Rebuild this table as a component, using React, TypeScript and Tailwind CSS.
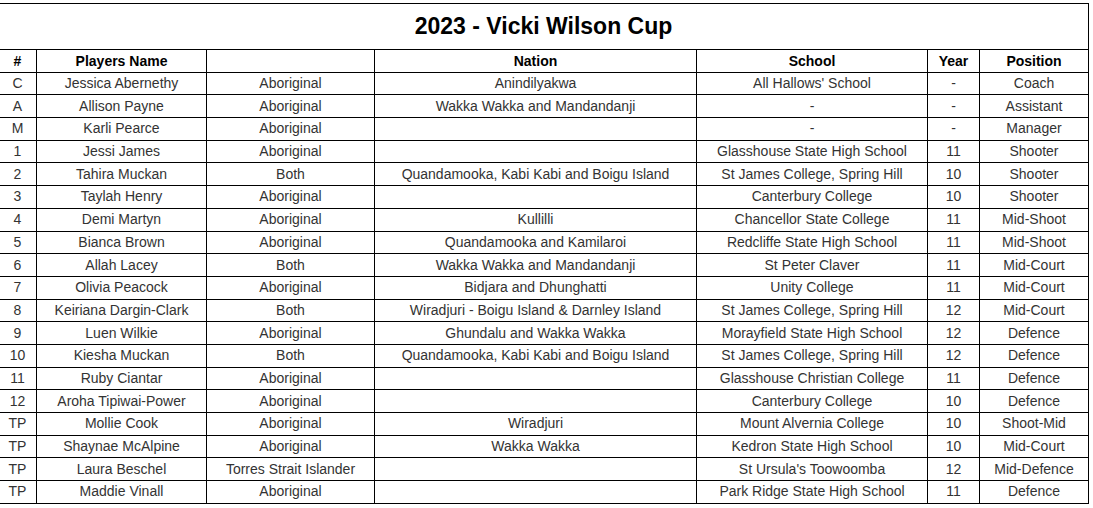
const rows: string[][] = [
  ["C", "Jessica Abernethy", "Aboriginal", "Anindilyakwa", "All Hallows' School", "-", "Coach"],
  ["A", "Allison Payne", "Aboriginal", "Wakka Wakka and Mandandanji", "-", "-", "Assistant"],
  ["M", "Karli Pearce", "Aboriginal", "", "-", "-", "Manager"],
  ["1", "Jessi James", "Aboriginal", "", "Glasshouse State High School", "11", "Shooter"],
  ["2", "Tahira Muckan", "Both", "Quandamooka, Kabi Kabi and Boigu Island", "St James College, Spring Hill", "10", "Shooter"],
  ["3", "Taylah Henry", "Aboriginal", "", "Canterbury College", "10", "Shooter"],
  ["4", "Demi Martyn", "Aboriginal", "Kullilli", "Chancellor State College", "11", "Mid-Shoot"],
  ["5", "Bianca Brown", "Aboriginal", "Quandamooka and Kamilaroi", "Redcliffe State High School", "11", "Mid-Shoot"],
  ["6", "Allah Lacey", "Both", "Wakka Wakka and Mandandanji", "St Peter Claver", "11", "Mid-Court"],
  ["7", "Olivia Peacock", "Aboriginal", "Bidjara and Dhunghatti", "Unity College", "11", "Mid-Court"],
  ["8", "Keiriana Dargin-Clark", "Both", "Wiradjuri - Boigu Island & Darnley Island", "St James College, Spring Hill", "12", "Mid-Court"],
  ["9", "Luen Wilkie", "Aboriginal", "Ghundalu and Wakka Wakka", "Morayfield State High School", "12", "Defence"],
  ["10", "Kiesha Muckan", "Both", "Quandamooka, Kabi Kabi and Boigu Island", "St James College, Spring Hill", "12", "Defence"],
  ["11", "Ruby Ciantar", "Aboriginal", "", "Glasshouse Christian College", "11", "Defence"],
  ["12", "Aroha Tipiwai-Power", "Aboriginal", "", "Canterbury College", "10", "Defence"],
  ["TP", "Mollie Cook", "Aboriginal", "Wiradjuri", "Mount Alvernia College", "10", "Shoot-Mid"],
  ["TP", "Shaynae McAlpine", "Aboriginal", "Wakka Wakka", "Kedron State High School", "10", "Mid-Court"],
  ["TP", "Laura Beschel", "Torres Strait Islander", "", "St Ursula's Toowoomba", "12", "Mid-Defence"],
  ["TP", "Maddie Vinall", "Aboriginal", "", "Park Ridge State High School", "11", "Defence"],
];

const headers = ["#", "Players Name", "", "Nation", "School", "Year", "Position"];
const widths = ["w-[38px]", "w-[170px]", "w-[168px]", "w-[322px]", "w-[231px]", "w-[52px]", "w-[109px]"];

export default function App() {
  return (
    <div className="min-h-screen overflow-hidden bg-white pt-[3px] font-['Liberation_Sans',Arial,sans-serif]">
      <table className="ml-[-2px] w-[1091px] table-fixed border-collapse">
        <colgroup>
          {widths.map((w, i) => (
            <col key={i} className={w} />
          ))}
        </colgroup>
        <thead>
          <tr className="h-[46px]">
            <th colSpan={7} className="border border-black text-center text-[23px] font-bold text-black">
              2023 - Vicki Wilson Cup
            </th>
          </tr>
          <tr className="h-[22.7px]">
            {headers.map((h, i) => (
              <th key={i} className="border border-black p-0 text-center text-[14px] font-bold leading-none text-black">
                {h}
              </th>
            ))}
          </tr>
        </thead>
        <tbody>
          {rows.map((r, i) => (
            <tr key={i} className="h-[22.7px]">
              {r.map((c, j) => (
                <td key={j} className="border border-black p-0 pb-px text-center text-[14px] leading-none text-[#333]">
                  {c}
                </td>
              ))}
            </tr>
          ))}
        </tbody>
      </table>
    </div>
  );
}
